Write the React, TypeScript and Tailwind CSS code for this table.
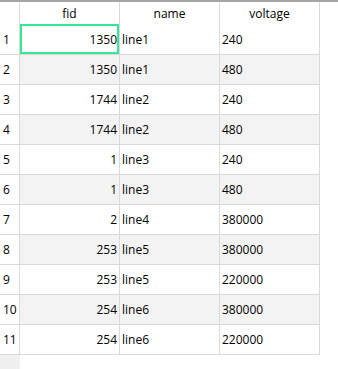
const rows: [number, number, string, string][] = [
  [1, 1350, 'line1', '240'],
  [2, 1350, 'line1', '480'],
  [3, 1744, 'line2', '240'],
  [4, 1744, 'line2', '480'],
  [5, 1, 'line3', '240'],
  [6, 1, 'line3', '480'],
  [7, 2, 'line4', '380000'],
  [8, 253, 'line5', '380000'],
  [9, 253, 'line5', '220000'],
  [10, 254, 'line6', '380000'],
  [11, 254, 'line6', '220000'],
];

export default function App() {
  return (
    <div className="w-[338px] h-[369px] bg-white overflow-hidden text-[12px] text-black" style={{ fontFamily: '"Open Sans", "Noto Sans", sans-serif' }}>
      <div className="h-[2px] bg-[#a6a6a6]" />
      <div className="w-[320px]">
        {/* header */}
        <div className="grid grid-cols-[20px_100px_100px_100px] h-[23px]">
          <div className="border-r border-[#d9d9d9]" />
          <div className="border-r border-[#d9d9d9] flex items-center justify-center">fid</div>
          <div className="border-r border-[#d9d9d9] flex items-center justify-center">name</div>
          <div className="border-r border-[#d9d9d9] flex items-center justify-center">voltage</div>
        </div>
        {rows.map(([n, fid, name, voltage]) => {
          const alt = n % 2 === 0 ? 'bg-[#f3f3f3]' : 'bg-white';
          return (
            <div key={n} className="grid grid-cols-[20px_100px_100px_100px] h-[30px] border-b border-[#d9d9d9]">
              <div className="border-r border-[#d9d9d9] flex items-center pl-[3px] bg-white">{n}</div>
              <div className={`relative border-r border-[#d9d9d9] flex items-center justify-end pr-[2px] ${alt}`}>
                {n === 1 && <div className="absolute left-0 right-0 top-[-1px] bottom-0 border-2 border-[#33e897]" />}
                {fid}
              </div>
              <div className={`border-r border-[#d9d9d9] flex items-center pl-[2px] ${alt}`}>{name}</div>
              <div className={`border-r border-[#d9d9d9] flex items-center pl-[2px] ${alt}`}>{voltage}</div>
            </div>
          );
        })}
        <div className="w-[20px] h-[14px] bg-[#f0f0f0]" />
      </div>
    </div>
  );
}
